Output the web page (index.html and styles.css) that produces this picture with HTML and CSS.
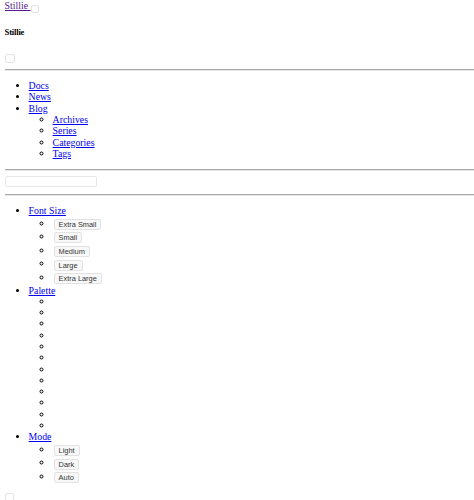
FILE: index.html
```html
<!DOCTYPE html>
<html lang="en">
<head>
<meta charset="utf-8">
<title>Stillie</title>
<link rel="stylesheet" href="styles.css">
</head>
<body>
<header class="top">
  <a class="brand" href="#">Stillie </a><button class="icon-btn" type="button" aria-label="Menu"></button>
</header>
<div class="title">Stillie</div>
<div class="toggle-row"><button class="toggle" type="button" aria-label="Toggle"></button></div>
<hr class="rule">
<ul class="nav">
  <li><a href="#">Docs</a></li>
  <li><a href="#">News</a></li>
  <li><a href="#">Blog</a>
    <ul class="sub">
      <li><a href="#">Archives</a></li>
      <li><a href="#">Series</a></li>
      <li><a href="#">Categories</a></li>
      <li><a href="#">Tags</a></li>
    </ul>
  </li>
</ul>
<hr class="rule">
<div class="search"><input class="search-input" type="text" aria-label="Search"></div>
<hr class="rule">
<ul class="settings">
  <li><a href="#">Font Size</a>
    <ul class="sub">
      <li class="btn-item"><button class="opt" type="button">Extra Small</button></li>
      <li class="btn-item"><button class="opt" type="button">Small</button></li>
      <li class="btn-item"><button class="opt" type="button">Medium</button></li>
      <li class="btn-item"><button class="opt" type="button">Large</button></li>
      <li class="btn-item"><button class="opt" type="button">Extra Large</button></li>
    </ul>
  </li>
  <li><a href="#">Palette</a>
    <ul class="sub">
      <li class="swatch"></li>
      <li class="swatch"></li>
      <li class="swatch"></li>
      <li class="swatch"></li>
      <li class="swatch"></li>
      <li class="swatch"></li>
      <li class="swatch"></li>
      <li class="swatch"></li>
      <li class="swatch"></li>
      <li class="swatch"></li>
      <li class="swatch"></li>
      <li class="swatch"></li>
    </ul>
  </li>
  <li><a href="#">Mode</a>
    <ul class="sub">
      <li class="btn-item"><button class="opt" type="button">Light</button></li>
      <li class="btn-item"><button class="opt" type="button">Dark</button></li>
      <li class="btn-item"><button class="opt" type="button">Auto</button></li>
    </ul>
  </li>
</ul>
<div class="bottom-box"></div>
</body>
</html>
```

FILE: styles.css
```css
html, body {
  background: #ffffff;
}
body {
  margin: 0 0 0 4.6px;
  font-family: "Liberation Serif", "Times New Roman", serif;
  font-size: 9.8px;
  line-height: 11.3px;
  color: #000;
}
a {
  color: #0000ee;
}
.top {
  height: 11.3px;
  display: flex;
  align-items: flex-start;
}
.brand {
  color: #551a8b;
  white-space: pre;
}
.icon-btn {
  margin: 5px 0 0 1px;
  padding: 0;
  width: 8px;
  height: 8px;
  border: 1px solid #e2e2e2;
  border-radius: 2px;
  background: #fdfdfd;
}
.title {
  margin-top: 16px;
  font-size: 8.6px;
  letter-spacing: -0.2px;
  font-weight: bold;
}
.toggle-row {
  margin-top: 15px;
  height: 9px;
}
.toggle {
  display: block;
  width: 10px;
  height: 9px;
  padding: 0;
  border: 1px solid #e4e4e4;
  border-radius: 2px;
  background: #fdfdfd;
}
.rule {
  margin: 6px 0 0;
  height: 0;
  border: 0;
  border-top: 1px solid #a8a8a8;
  border-bottom: 1px solid #e6e6e6;
}
.nav {
  margin: 9.6px 0;
  padding-left: 24px;
  list-style: disc;
}
.sub {
  margin: 0;
  padding-left: 24px;
  list-style: circle;
}
.search {
  padding: 5px 0 7px;
}
.search + .rule {
  margin-top: 0;
}
.nav + .rule {
  margin-top: 0;
}
.search-input {
  display: block;
  box-sizing: border-box;
  width: 92px;
  height: 11px;
  margin: 0;
  padding: 0 2px;
  border: 1px solid #e6e6e6;
  border-radius: 2px;
  background: #fff;
  font-size: 7px;
}
.settings {
  margin: 9.4px 0 9.6px;
  padding-left: 24px;
  list-style: disc;
}
.btn-item {
  height: 13.6px;
  line-height: 13.6px;
}
.opt {
  display: inline-block;
  vertical-align: middle;
  box-sizing: border-box;
  height: 11px;
  margin: 0 0 0 1px;
  padding: 0 4px;
  font-family: "Liberation Sans", Arial, sans-serif;
  font-size: 7.4px;
  line-height: 9px;
  color: #333;
  background: #f8f8f8;
  border: 1px solid #e2e2e2;
  border-radius: 2px;
}
.swatch {
  height: 11.3px;
}
.bottom-box {
  width: 9px;
  height: 9px;
  border: 1px solid #e4e4e4;
  border-radius: 2px;
  box-sizing: border-box;
}
```
